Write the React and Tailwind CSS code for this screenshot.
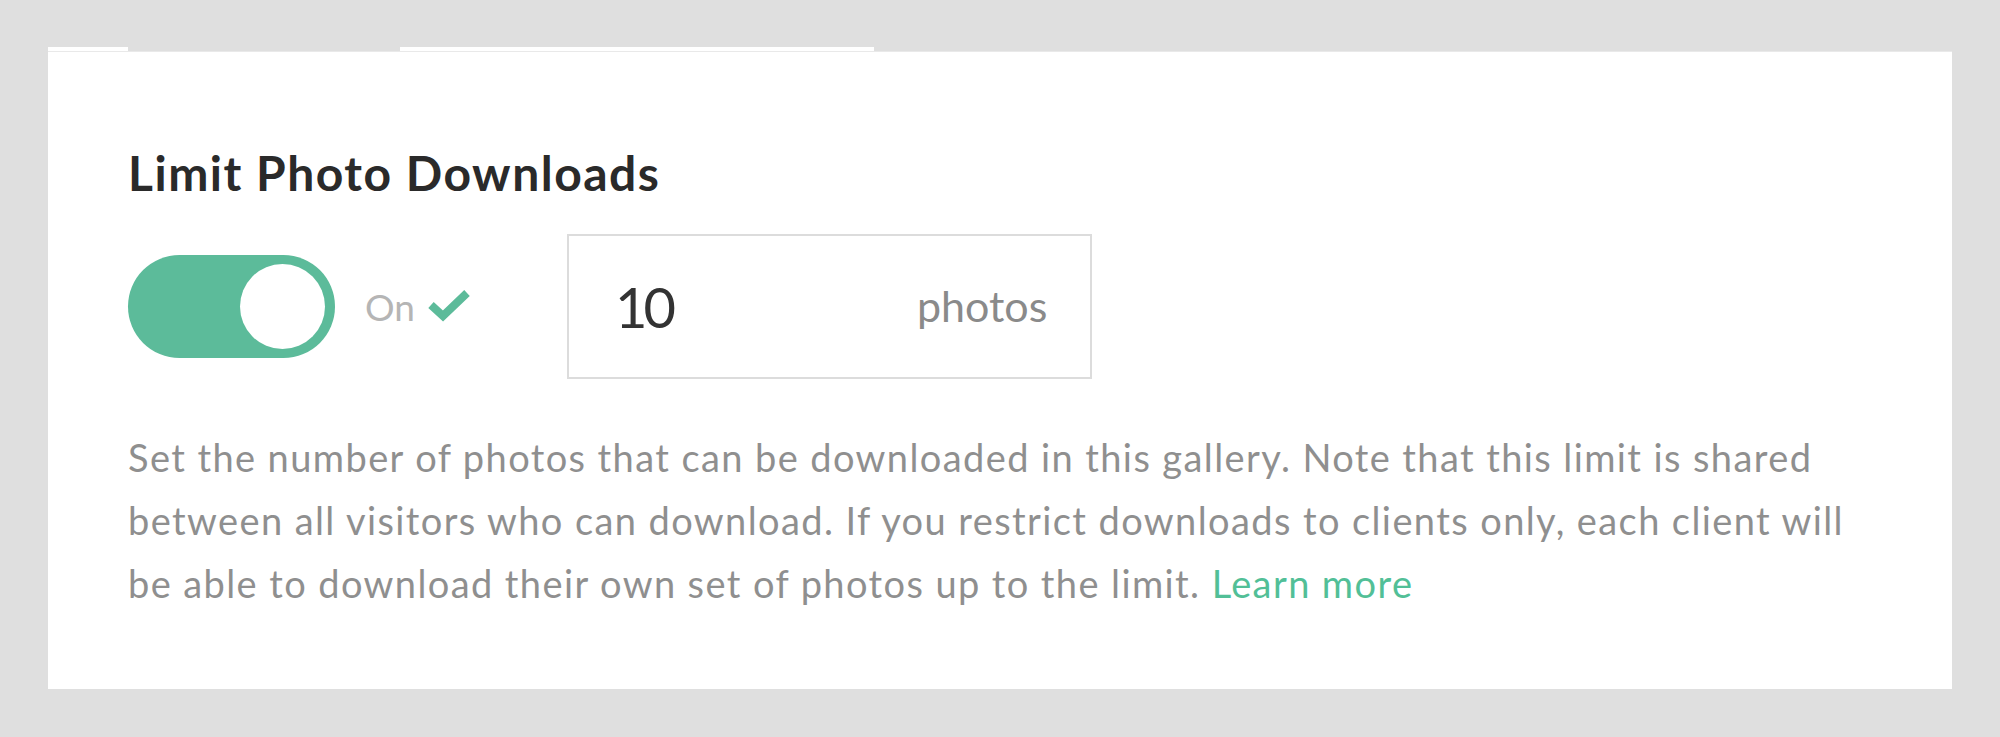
import React from "react";

export default function App() {
  return (
    <div className="min-h-screen w-full bg-[#dfdfdf] px-[48px] pt-[47px] pb-[47px]" style={{ fontFamily: "Lato, 'Open Sans', sans-serif" }}>
      <div className="flex h-[4px]">
        <div className="w-[80px] bg-white" />
        <div className="w-[272px]" />
        <div className="w-[474px] bg-white" />
      </div>
      <div className="bg-white border-t border-[#e9e9e9] pl-[80px] pr-[80px] pt-[97px] pb-[74px]">
        <h2 className="text-[48px] leading-none font-bold tracking-[1.5px] text-[#2a2a2a]">Limit Photo Downloads</h2>
        <div className="mt-[37px] flex items-center">
          <div className="flex h-[103px] w-[207px] items-center justify-end rounded-full bg-[#5cbb9a] pr-[10px]">
            <div className="h-[85px] w-[85px] rounded-full bg-white" />
          </div>
          <span className="ml-[30px] text-[37px] text-[#b5b5b5]">On</span>
          <svg className="ml-[12px] mb-[4px]" width="44" height="34" viewBox="0 0 44 34" fill="none">
            <path d="M4 17 L16 28 L40 5" stroke="#5cbb9a" strokeWidth="8" strokeLinecap="butt" strokeLinejoin="miter" />
          </svg>
          <div className="ml-[96px] flex h-[145px] w-[525px] border-2 border-[#dcdcdc]">
            <div className="flex w-[345px] items-center pl-[46px] text-[56px] tracking-[-4px] text-[#333333]">10</div>
            <div className="flex flex-1 items-center pl-[3px] text-[43px] text-[#8a8a8a]">photos</div>
          </div>
        </div>
        <p className="mt-[47px] text-[38px] leading-[63px] tracking-[1.4px] text-[#8f8f8f]">
          Set the number of photos that can be downloaded in this gallery. Note that this limit is shared between all visitors who can download. If you restrict downloads to clients only, each client will be able to download their own set of photos up to the limit.{" "}
          <span className="text-[#52bf97] cursor-pointer">Learn more</span>
        </p>
      </div>
    </div>
  );
}
